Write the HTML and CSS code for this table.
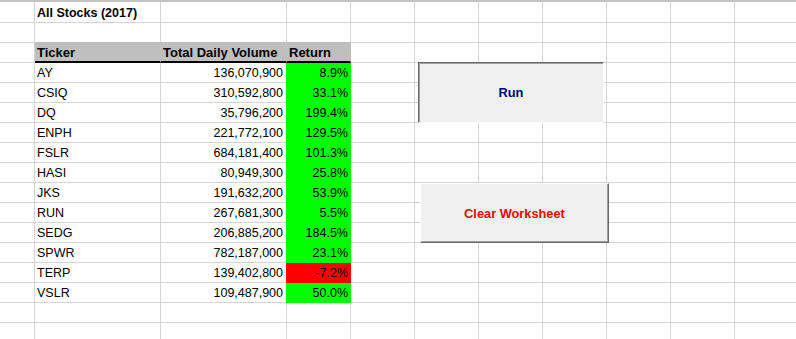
FILE: index.html
```html
<!DOCTYPE html>
<html lang="en">
<head>
<meta charset="utf-8">
<title>All Stocks (2017)</title>
<link rel="stylesheet" href="styles.css">
</head>
<body>
<div class="page">
  <div class="sheet">
    <div class="c"></div><div class="c t">All Stocks (2017)</div><div class="c"></div><div class="c"></div><div class="c rest"></div>
    <div class="c"></div><div class="c hg"></div><div class="c hg"></div><div class="c hg"></div><div class="c rest"></div>
    <div class="c"></div><div class="c h">Ticker</div><div class="c h">Total Daily Volume</div><div class="c h">Return</div><div class="c rest"></div>

    <div class="c"></div><div class="c">AY</div><div class="c n">136,070,900</div><div class="c g">8.9%</div><div class="c rest"></div>
    <div class="c"></div><div class="c">CSIQ</div><div class="c n">310,592,800</div><div class="c g">33.1%</div><div class="c rest"></div>
    <div class="c"></div><div class="c">DQ</div><div class="c n">35,796,200</div><div class="c g">199.4%</div><div class="c rest"></div>
    <div class="c"></div><div class="c">ENPH</div><div class="c n">221,772,100</div><div class="c g">129.5%</div><div class="c rest"></div>
    <div class="c"></div><div class="c">FSLR</div><div class="c n">684,181,400</div><div class="c g">101.3%</div><div class="c rest"></div>
    <div class="c"></div><div class="c">HASI</div><div class="c n">80,949,300</div><div class="c g">25.8%</div><div class="c rest"></div>
    <div class="c"></div><div class="c">JKS</div><div class="c n">191,632,200</div><div class="c g">53.9%</div><div class="c rest"></div>
    <div class="c"></div><div class="c">RUN</div><div class="c n">267,681,300</div><div class="c g">5.5%</div><div class="c rest"></div>
    <div class="c"></div><div class="c">SEDG</div><div class="c n">206,885,200</div><div class="c g">184.5%</div><div class="c rest"></div>
    <div class="c"></div><div class="c">SPWR</div><div class="c n">782,187,000</div><div class="c g">23.1%</div><div class="c rest"></div>
    <div class="c"></div><div class="c">TERP</div><div class="c n">139,402,800</div><div class="c r">-7.2%</div><div class="c rest"></div>
    <div class="c"></div><div class="c">VSLR</div><div class="c n">109,487,900</div><div class="c g">50.0%</div><div class="c rest"></div>

    <div class="c"></div><div class="c"></div><div class="c"></div><div class="c"></div><div class="c rest"></div>
    <div class="c"></div><div class="c"></div><div class="c"></div><div class="c"></div><div class="c rest"></div>
  </div>

  <div class="btn run">Run</div>
  <div class="btn clear">Clear Worksheet</div>
</div>
</body>
</html>
```

FILE: styles.css
```css
html, body {
  margin: 0;
  padding: 0;
  background: #ffffff;
}

body {
  font-family: "Liberation Sans", Arial, sans-serif;
  font-size: 12.5px;
  color: #000000;
}

.page {
  position: relative;
  width: 796px;
  height: 339px;
  overflow: hidden;
}

.sheet {
  display: grid;
  grid-template-columns: 35px 126px 126px 64px 1fr;
  grid-template-rows: 21px;
  grid-auto-rows: 20px;
  border-top: 2px solid #c2c2c2;
}

.c {
  box-sizing: border-box;
  border-right: 1px solid #d4d4d4;
  border-bottom: 1px solid #d4d4d4;
  display: flex;
  align-items: flex-end;
  padding: 0 2px 2px 2px;
  line-height: 14px;
  white-space: nowrap;
  min-width: 0;
}

.t {
  font-weight: bold;
  overflow: visible;
  padding-bottom: 2px;
}

.hg {
  border-bottom-color: #bfbfbf;
}

.h {
  background: #bfbfbf;
  border-right-color: #bfbfbf;
  border-bottom: 2px solid #000000;
  font-weight: bold;
  font-size: 13px;
  padding-bottom: 1px;
}

.n {
  justify-content: flex-end;
  padding-right: 3px;
}

.g,
.r {
  margin-left: -1px;
  justify-content: flex-end;
  padding-right: 2px;
}

.g {
  background: #00ff00;
  border-color: #00ff00;
}

.r {
  background: #ff0000;
  border-color: #ff0000;
}

.rest {
  border-right: none;
  background: repeating-linear-gradient(to right, transparent 0, transparent 63px, #d4d4d4 63px, #d4d4d4 64px);
}

.btn {
  position: absolute;
  box-sizing: border-box;
  background: #f0f0f0;
  display: flex;
  align-items: center;
  justify-content: center;
  font-weight: bold;
  font-size: 12.8px;
}

.run {
  left: 418px;
  top: 62px;
  width: 186px;
  height: 61px;
  border-top: 1px solid #696969;
  border-left: 1px solid #696969;
  border-right: 1px solid #ffffff;
  border-bottom: 1px solid #ffffff;
  box-shadow: inset 1px 1px 0 #a0a0a0;
  color: #000080;
}

.clear {
  left: 420px;
  top: 183px;
  width: 189px;
  height: 60px;
  border-top: 1px solid #ffffff;
  border-left: 1px solid #ffffff;
  border-right: 1px solid #696969;
  border-bottom: 1px solid #696969;
  box-shadow: inset -1px -1px 0 #a0a0a0;
  color: #ff0000;
}
```
